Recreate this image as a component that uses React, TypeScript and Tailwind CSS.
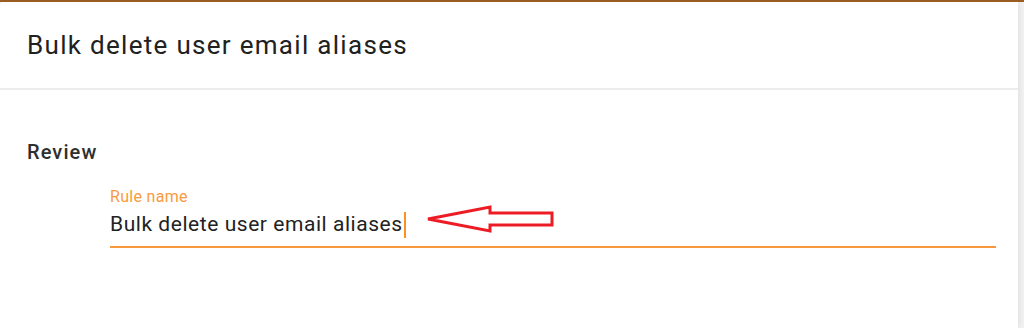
const Arrow = () => (
  <svg
    className="absolute left-[315px] top-[-9px]"
    width="132"
    height="30"
    viewBox="0 0 132 30"
    fill="none"
  >
    <polygon
      points="3,14 65,2 65,8 127,8 127,20 65,20 65,26"
      stroke="#ed1c24"
      strokeWidth="3"
      strokeLinejoin="miter"
    />
  </svg>
);

const App = () => {
  return (
    <div className="h-[328px] w-[1024px] overflow-hidden bg-[#f3f3f3] pt-[2px] font-['Roboto',sans-serif] [background-image:linear-gradient(#9c5f24,#9c5f24)] [background-repeat:no-repeat] [background-size:100%_2px]">
      {/* Dialog */}
      <div className="h-full w-[1018px] rounded-tl-[4px] bg-white shadow-[2px_0_6px_rgba(0,0,0,0.08)]">
        <header className="flex h-[88px] items-center border-b-2 border-[#ececec] px-[27px]">
          <h1 className="text-[26px] font-normal leading-none tracking-[1.3px] text-[#212121]">
            Bulk delete user email aliases
          </h1>
        </header>
        <section className="px-[27px] pt-[52px]">
          <h2 className="text-[20px] font-medium leading-[20px] tracking-[1.1px] text-[#2e2e2e]">
            Review
          </h2>
          <div className="ml-[83px] mt-[27px] w-[886px]">
            <label className="block text-[16px] leading-[16px] tracking-[0.3px] text-[#f99a3d]">
              Rule name
            </label>
            <div className="relative mt-[9px] flex h-[34px] items-start border-b-2 border-[#f89a3c]">
              <span className="text-[21px] leading-[21px] tracking-[0.55px] text-[#222]">
                Bulk delete user email aliases
              </span>
              <span className="-mt-[2px] ml-px h-[26px] w-[2px] bg-[#f7931e]" />
              <Arrow />
            </div>
          </div>
        </section>
      </div>
    </div>
  );
};

export default App;
